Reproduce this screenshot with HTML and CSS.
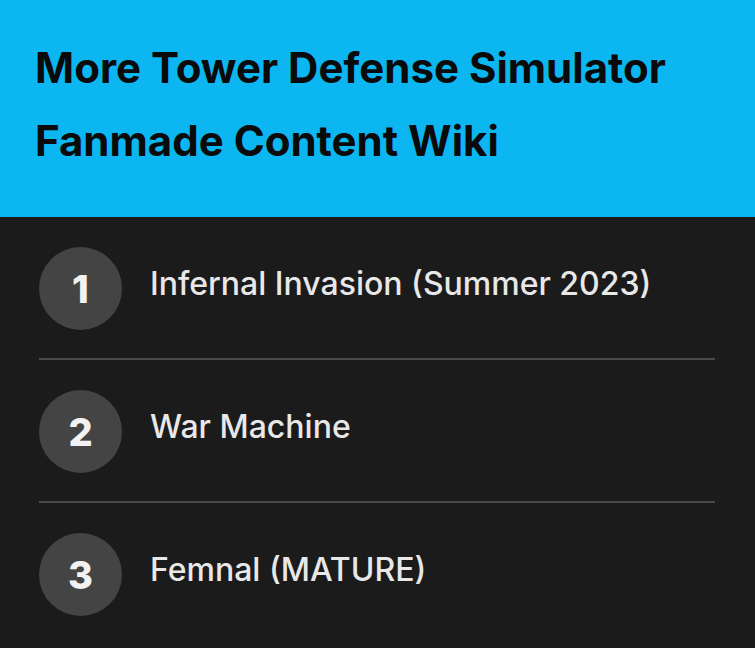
FILE: index.html
```html
<!DOCTYPE html>
<html lang="en">
<head>
<meta charset="utf-8">
<title>More Tower Defense Simulator Fanmade Content Wiki</title>
<link rel="stylesheet" href="styles.css">
</head>
<body>
<header class="wiki-header">
  <h1 class="wiki-title">More Tower Defense Simulator Fanmade Content Wiki</h1>
</header>
<ol class="top-list">
  <li class="top-item">
    <span class="rank">1</span>
    <span class="item-name">Infernal Invasion (Summer 2023)</span>
  </li>
  <li class="top-item">
    <span class="rank">2</span>
    <span class="item-name">War Machine</span>
  </li>
  <li class="top-item">
    <span class="rank">3</span>
    <span class="item-name">Femnal (MATURE)</span>
  </li>
</ol>
</body>
</html>
```
FILE: styles.css
```css
html, body {
  margin: 0;
  padding: 0;
}

body {
  background: #1b1b1b;
  font-family: "Inter", "Roboto", "Liberation Sans", sans-serif;
  height: 648px;
  overflow: hidden;
}

.wiki-header {
  background: #0bb6f1;
  height: 217px;
  box-sizing: border-box;
  padding: 31px 40px 0 35px;
}

.wiki-title {
  margin: 0;
  color: #0a0a0a;
  font-size: 42px;
  font-weight: 700;
  line-height: 73px;
  letter-spacing: 0;
}

.top-list {
  list-style: none;
  margin: 0;
  padding: 0 40px 0 39px;
}

.top-item {
  display: flex;
  align-items: center;
  gap: 28px;
  padding: 30px 0 28px;
  border-bottom: 2px solid #4a4a4a;
}

.top-item:last-child {
  border-bottom: none;
}

.rank {
  flex: none;
  width: 83px;
  height: 83px;
  border-radius: 50%;
  background: #444444;
  color: #f2f2f2;
  font-size: 38px;
  font-weight: 800;
  display: flex;
  align-items: center;
  justify-content: center;
}

.item-name {
  color: #e8e8e8;
  font-size: 32px;
  font-weight: 500;
  margin-top: -10px;
}
```
